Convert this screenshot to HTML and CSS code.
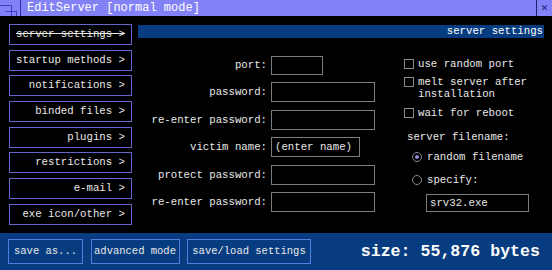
FILE: index.html
```html
<!DOCTYPE html>
<html lang="en">
<head>
  <meta charset="UTF-8">
  <title>EditServer</title>
  <link rel="stylesheet" href="styles.css">
</head>
<body>
  <div class="window">
    <div class="titlebar">
      <div class="title-icon">
        <svg width="20" height="16" viewBox="0 0 20 16">
          <path d="M0 5.5H11.5V16M5.5 11.5H16.5V16" fill="none" stroke="#3c3cc8" stroke-width="1"/>
        </svg>
      </div>
      <div class="title-text">EditServer [normal mode]</div>
      <div class="title-close">&#x2715;</div>
    </div>

    <div class="main">
      <div class="nav">
        <div class="nav-btn current">server settings &gt;</div>
        <div class="nav-btn">startup methods &gt;</div>
        <div class="nav-btn">notifications &gt;</div>
        <div class="nav-btn">binded files &gt;</div>
        <div class="nav-btn">plugins &gt;</div>
        <div class="nav-btn">restrictions &gt;</div>
        <div class="nav-btn">e-mail &gt;</div>
        <div class="nav-btn">exe icon/other &gt;</div>
      </div>

      <div class="content">
        <div class="section-head">server settings</div>
        <div class="panel">
          <div class="fields">
            <label>port:</label>
            <div class="field w-port"></div>
            <label>password:</label>
            <div class="field w-long"></div>
            <label>re-enter password:</label>
            <div class="field w-long"></div>
            <label>victim name:</label>
            <div class="field w-name">(enter name)</div>
            <label>protect password:</label>
            <div class="field w-long"></div>
            <label>re-enter password:</label>
            <div class="field w-long"></div>
          </div>

          <div class="options">
            <div class="opt o1"><span class="check"></span><span>use random port</span></div>
            <div class="opt o2"><span class="check"></span><span>melt server after<br>installation</span></div>
            <div class="opt o3"><span class="check"></span><span>wait for reboot</span></div>
            <div class="opt-title">server filename:</div>
            <div class="radio-row r1"><span class="radio on"></span><span>random filename</span></div>
            <div class="radio-row r2"><span class="radio"></span><span>specify:</span></div>
            <div class="field w-file">srv32.exe</div>
          </div>
        </div>
      </div>
    </div>

    <div class="footer">
      <div class="foot-btn b-save">save as...</div>
      <div class="foot-btn b-adv">advanced mode</div>
      <div class="foot-btn b-load">save/load settings</div>
      <div class="size">size: 55,876 bytes</div>
    </div>
  </div>
</body>
</html>
```

FILE: styles.css
```css
body {
  margin: 0;
  background: #000;
  font-family: "Liberation Mono", "DejaVu Sans Mono", monospace;
  color: #e8e8e8;
}
.window {
  width: 552px;
  height: 270px;
  background: #000;
  display: flex;
  flex-direction: column;
  overflow: hidden;
}

/* title bar */
.titlebar {
  height: 16px;
  background: #8282f6;
  display: flex;
  align-items: center;
  flex-shrink: 0;
}
.title-icon {
  width: 20px;
  height: 16px;
  border-right: 1px solid #3030a8;
}
.title-icon svg {
  display: block;
}
.title-text {
  flex: 1;
  padding-left: 6px;
  font-size: 12px;
  color: #fff;
  line-height: 16px;
}
.title-close {
  width: 15px;
  height: 16px;
  border-left: 1px solid #202070;
  color: #1c1c70;
  font-family: "DejaVu Sans", sans-serif;
  font-size: 9px;
  line-height: 16px;
  text-align: center;
}

/* main area */
.main {
  height: 217px;
  display: flex;
  gap: 6px;
  padding-left: 9px;
}
.nav {
  width: 123px;
  padding-top: 8px;
  display: flex;
  flex-direction: column;
  gap: 4.7px;
}
.nav-btn {
  height: 19px;
  border: 1px solid #6666cc;
  font-size: 10.7px;
  line-height: 19px;
  text-align: right;
  padding-right: 6px;
  white-space: nowrap;
}
.nav-btn.current {
  text-decoration: line-through;
}

.content {
  width: 406px;
  padding-top: 9px;
}
.section-head {
  height: 13px;
  background: #073d80;
  font-size: 10.7px;
  line-height: 13px;
  text-align: right;
  padding-right: 1px;
  color: #fff;
}
.panel {
  display: flex;
}

/* form fields */
.fields {
  display: grid;
  grid-template-columns: 129px 104px;
  grid-auto-rows: 20px;
  row-gap: 7.4px;
  column-gap: 4px;
  margin-top: 17px;
  align-items: center;
}
.fields label {
  text-align: right;
  font-size: 10.7px;
  white-space: nowrap;
}
.field {
  box-sizing: border-box;
  height: 20px;
  border: 1px solid #7c7c7c;
  background: #000;
  font-size: 10.7px;
  line-height: 18px;
  padding-left: 3px;
  white-space: nowrap;
}
.w-port { width: 52px; height: 19px; }
.w-long { width: 104px; }
.w-name { width: 89px; }
.w-file { width: 103px; height: 18px; line-height: 16px; margin-left: 22px; margin-top: 8px; }

/* right options */
.options {
  margin-left: 29px;
  padding-top: 20px;
  font-size: 10.7px;
  line-height: 12px;
  display: flex;
  flex-direction: column;
}
.opt {
  display: flex;
  gap: 4px;
  white-space: nowrap;
}
.o2 { margin-top: 6px; }
.o3 { margin-top: 7px; }
.check {
  width: 8px;
  height: 8px;
  margin-top: 1px;
  border: 1px solid #8a8a8a;
  flex-shrink: 0;
}
.opt-title {
  margin-top: 12px;
  padding-left: 3px;
}
.radio-row {
  display: flex;
  align-items: center;
  gap: 5px;
  padding-left: 8px;
}
.r1 { margin-top: 8px; }
.r2 { margin-top: 11px; }
.radio {
  width: 8px;
  height: 8px;
  border: 1px solid #8a8a8a;
  border-radius: 50%;
  position: relative;
}
.radio.on::after {
  content: "";
  position: absolute;
  left: 2px;
  top: 2px;
  width: 4px;
  height: 4px;
  border-radius: 50%;
  background: #8c8cd8;
}

/* footer */
.footer {
  height: 37px;
  background: #073d80;
  display: flex;
  align-items: center;
  padding: 0 12px 0 8px;
  gap: 7.5px;
  flex-shrink: 0;
}
.foot-btn {
  box-sizing: border-box;
  height: 25px;
  border: 1px solid #4f7fe0;
  font-size: 10.5px;
  line-height: 23px;
  text-align: center;
  white-space: nowrap;
}
.b-save { width: 75px; }
.b-adv { width: 89px; }
.b-load { width: 124px; }
.size {
  margin-left: auto;
  font-weight: bold;
  font-size: 16.6px;
  color: #fff;
}
```
